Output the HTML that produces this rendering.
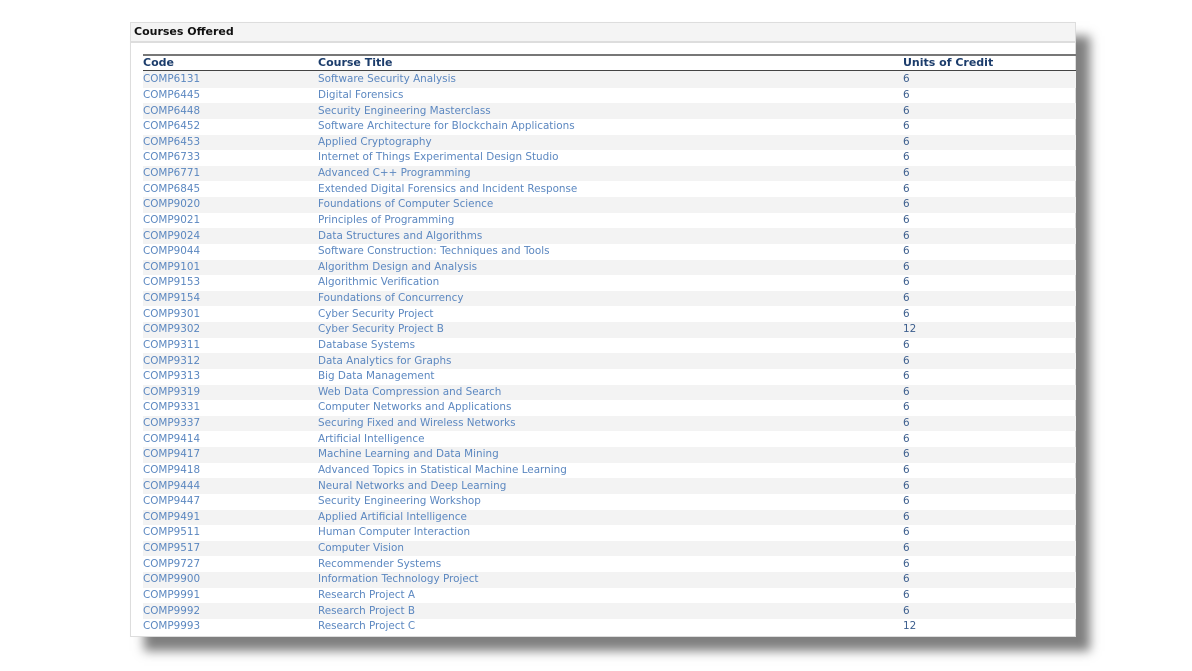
<!DOCTYPE html>
<html><head><style>
body{margin:0;width:1192px;height:671px;background:#fff;position:relative;overflow:hidden;font-family:"DejaVu Sans","Liberation Sans",sans-serif;}
.panel{position:absolute;left:130px;top:22px;width:946px;height:615px;background:#fff;border:1px solid #ddd;box-sizing:border-box;box-shadow:14px 14px 10px rgba(0,0,0,0.5);}
.hd{height:18px;background:#f4f4f4;border-bottom:2px solid #ddd;font-weight:bold;font-size:11px;line-height:18px;padding-left:3px;color:#111;}
table{position:absolute;left:12px;top:31px;width:933px;border-collapse:collapse;font-size:10.4px;}
th{text-align:left;color:#1b3c6b;font-weight:bold;font-size:11px;border-top:2px solid #777;border-bottom:1px solid #444;height:13px;line-height:13px;padding:0 0 1px 0;}
td{height:15.63px;line-height:15px;padding:0;color:#5b87c0;}
tbody tr:first-child td{padding-top:1px;}
tbody tr:nth-child(odd) td{background:#f3f3f3;}
td:nth-child(3){color:#3d5f8e;}
</style></head><body>
<div class="panel"><div class="hd">Courses Offered</div>
<table><colgroup><col style="width:175px"><col style="width:585px"><col></colgroup>
<thead><tr><th>Code</th><th>Course Title</th><th>Units of Credit</th></tr></thead>
<tbody>
<tr><td>COMP6131</td><td>Software Security Analysis</td><td>6</td></tr>
<tr><td>COMP6445</td><td>Digital Forensics</td><td>6</td></tr>
<tr><td>COMP6448</td><td>Security Engineering Masterclass</td><td>6</td></tr>
<tr><td>COMP6452</td><td>Software Architecture for Blockchain Applications</td><td>6</td></tr>
<tr><td>COMP6453</td><td>Applied Cryptography</td><td>6</td></tr>
<tr><td>COMP6733</td><td>Internet of Things Experimental Design Studio</td><td>6</td></tr>
<tr><td>COMP6771</td><td>Advanced C++ Programming</td><td>6</td></tr>
<tr><td>COMP6845</td><td>Extended Digital Forensics and Incident Response</td><td>6</td></tr>
<tr><td>COMP9020</td><td>Foundations of Computer Science</td><td>6</td></tr>
<tr><td>COMP9021</td><td>Principles of Programming</td><td>6</td></tr>
<tr><td>COMP9024</td><td>Data Structures and Algorithms</td><td>6</td></tr>
<tr><td>COMP9044</td><td>Software Construction: Techniques and Tools</td><td>6</td></tr>
<tr><td>COMP9101</td><td>Algorithm Design and Analysis</td><td>6</td></tr>
<tr><td>COMP9153</td><td>Algorithmic Verification</td><td>6</td></tr>
<tr><td>COMP9154</td><td>Foundations of Concurrency</td><td>6</td></tr>
<tr><td>COMP9301</td><td>Cyber Security Project</td><td>6</td></tr>
<tr><td>COMP9302</td><td>Cyber Security Project B</td><td>12</td></tr>
<tr><td>COMP9311</td><td>Database Systems</td><td>6</td></tr>
<tr><td>COMP9312</td><td>Data Analytics for Graphs</td><td>6</td></tr>
<tr><td>COMP9313</td><td>Big Data Management</td><td>6</td></tr>
<tr><td>COMP9319</td><td>Web Data Compression and Search</td><td>6</td></tr>
<tr><td>COMP9331</td><td>Computer Networks and Applications</td><td>6</td></tr>
<tr><td>COMP9337</td><td>Securing Fixed and Wireless Networks</td><td>6</td></tr>
<tr><td>COMP9414</td><td>Artificial Intelligence</td><td>6</td></tr>
<tr><td>COMP9417</td><td>Machine Learning and Data Mining</td><td>6</td></tr>
<tr><td>COMP9418</td><td>Advanced Topics in Statistical Machine Learning</td><td>6</td></tr>
<tr><td>COMP9444</td><td>Neural Networks and Deep Learning</td><td>6</td></tr>
<tr><td>COMP9447</td><td>Security Engineering Workshop</td><td>6</td></tr>
<tr><td>COMP9491</td><td>Applied Artificial Intelligence</td><td>6</td></tr>
<tr><td>COMP9511</td><td>Human Computer Interaction</td><td>6</td></tr>
<tr><td>COMP9517</td><td>Computer Vision</td><td>6</td></tr>
<tr><td>COMP9727</td><td>Recommender Systems</td><td>6</td></tr>
<tr><td>COMP9900</td><td>Information Technology Project</td><td>6</td></tr>
<tr><td>COMP9991</td><td>Research Project A</td><td>6</td></tr>
<tr><td>COMP9992</td><td>Research Project B</td><td>6</td></tr>
<tr><td>COMP9993</td><td>Research Project C</td><td>12</td></tr>
</tbody></table></div>
</body></html>
